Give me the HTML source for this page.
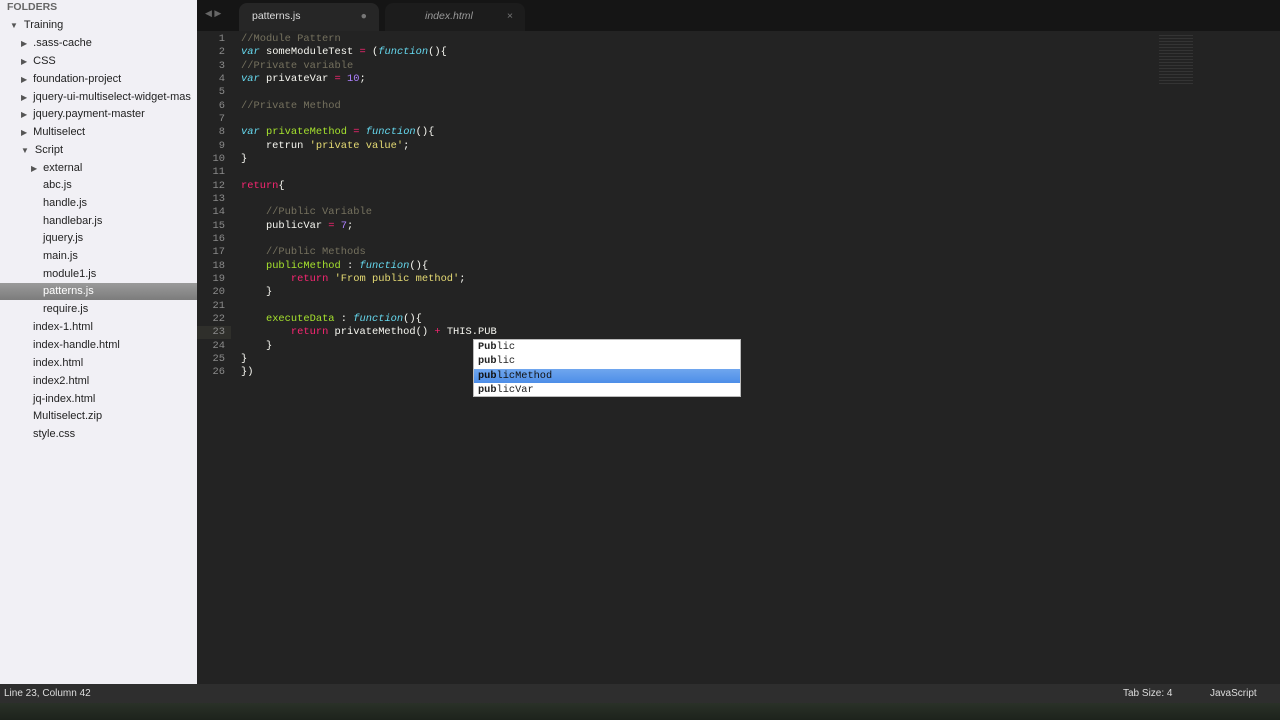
<!DOCTYPE html>
<html><head><meta charset="utf-8"><style>
*{margin:0;padding:0;box-sizing:border-box}
body{width:1280px;height:720px;overflow:hidden;background:#232323;position:relative;font-family:"Liberation Sans",sans-serif}
#side{position:absolute;left:0;top:0;width:197px;height:684px;background:#f1f0f5;font-size:11px;color:#222}
#side div{position:absolute;white-space:nowrap;height:18px;line-height:18px}
.tri{font-size:8px;color:#555;margin-right:6px}
#sel{left:0;width:197px;background:linear-gradient(#9a9a9a,#7c7c7c);color:#fff}
#tabs{position:absolute;left:197px;top:0;width:1083px;height:31px;background:#151515}
.tab{position:absolute;top:3px;height:28px;border-radius:8px 8px 0 0;font-size:10.5px;line-height:26px;color:#ddd}
#ed{position:absolute;left:197px;top:33px;width:1083px;height:651px;background:#232323;font-family:"Liberation Mono",monospace;font-size:10.4px}
.l{position:absolute;left:0;height:13px;line-height:13px;white-space:pre;color:#f8f8f2}
.n{position:absolute;width:28px;text-align:right;color:#8a8a8a}
.c{position:absolute;left:44px}
.cm{color:#75715e}.k{color:#66d9ef;font-style:italic}.r{color:#f92672}.g{color:#a6e22e}.s{color:#e6db74}.p{color:#ae81ff}
#ac{position:absolute;left:473px;top:339px;width:268px;height:58px;background:#fff;border:1px solid #bbb;font-family:"Liberation Mono",monospace;font-size:10.3px;color:#222}
#ac div{height:14.3px;line-height:14px;padding-left:4px}
#status{position:absolute;left:0;top:684px;width:1280px;height:19px;background:#2e2e2e;color:#ddd;font-size:10px;line-height:19px}
#dock{position:absolute;left:0;top:703px;width:1280px;height:17px;background:linear-gradient(#2a3128,#1d231c)}
</style></head><body>
<div id="side">
<div style="left:7px;top:-2px;color:#666;font-weight:bold;font-size:10.5px">FOLDERS</div>
<div style="left:10px;top:16px"><span class="tri">▼</span>Training</div>
<div style="left:21px;top:34px"><span class="tri">▶</span>.sass-cache</div>
<div style="left:21px;top:52px"><span class="tri">▶</span>CSS</div>
<div style="left:21px;top:70px"><span class="tri">▶</span>foundation-project</div>
<div style="left:21px;top:88px"><span class="tri">▶</span>jquery-ui-multiselect-widget-mas</div>
<div style="left:21px;top:105px"><span class="tri">▶</span>jquery.payment-master</div>
<div style="left:21px;top:123px"><span class="tri">▶</span>Multiselect</div>
<div style="left:21px;top:141px"><span class="tri">▼</span>Script</div>
<div style="left:31px;top:159px"><span class="tri">▶</span>external</div>
<div style="left:43px;top:176px">abc.js</div>
<div style="left:43px;top:194px">handle.js</div>
<div style="left:43px;top:212px">handlebar.js</div>
<div style="left:43px;top:229px">jquery.js</div>
<div style="left:43px;top:247px">main.js</div>
<div style="left:43px;top:265px">module1.js</div>
<div id="sel" style="top:283px;height:17px;line-height:17px"><span style="padding-left:43px">patterns.js</span></div>
<div style="left:43px;top:300px">require.js</div>
<div style="left:33px;top:318px">index-1.html</div>
<div style="left:33px;top:336px">index-handle.html</div>
<div style="left:33px;top:354px">index.html</div>
<div style="left:33px;top:372px">index2.html</div>
<div style="left:33px;top:390px">jq-index.html</div>
<div style="left:33px;top:407px">Multiselect.zip</div>
<div style="left:33px;top:425px">style.css</div>
</div>
<div id="tabs">
<div style="position:absolute;left:8px;top:8px;color:#666;font-size:9px">◀ ▶</div>
<div class="tab" style="left:42px;width:140px;background:#262626"><span style="padding-left:13px">patterns.js</span><span style="position:absolute;right:12px;color:#777">●</span></div>
<div class="tab" style="left:188px;width:140px;background:#1c1c1c;color:#999;font-style:italic"><span style="padding-left:40px">index.html</span><span style="position:absolute;right:12px;color:#777;font-style:normal">×</span></div>
</div>
<div id="ed">
<div style="position:absolute;left:0;top:293px;width:34px;height:13px;background:#2f2f2b"></div>
<div class="l" style="top:0"><span class="n">1</span><span class="c cm">//Module Pattern</span></div>
<div class="l" style="top:13.3px"><span class="n">2</span><span class="c"><span class="k">var</span> someModuleTest <span class="r">=</span> (<span class="k">function</span>(){</span></div>
<div class="l" style="top:26.6px"><span class="n">3</span><span class="c cm">//Private variable</span></div>
<div class="l" style="top:40px"><span class="n">4</span><span class="c"><span class="k">var</span> privateVar <span class="r">=</span> <span class="p">10</span>;</span></div>
<div class="l" style="top:53.3px"><span class="n">5</span></div>
<div class="l" style="top:66.6px"><span class="n">6</span><span class="c cm">//Private Method</span></div>
<div class="l" style="top:80px"><span class="n">7</span></div>
<div class="l" style="top:93.3px"><span class="n">8</span><span class="c"><span class="k">var</span> <span class="g">privateMethod</span> <span class="r">=</span> <span class="k">function</span>(){</span></div>
<div class="l" style="top:106.6px"><span class="n">9</span><span class="c">    retrun <span class="s">'private value'</span>;</span></div>
<div class="l" style="top:120px"><span class="n">10</span><span class="c">}</span></div>
<div class="l" style="top:133.3px"><span class="n">11</span></div>
<div class="l" style="top:146.6px"><span class="n">12</span><span class="c"><span class="r">return</span>{</span></div>
<div class="l" style="top:160px"><span class="n">13</span></div>
<div class="l" style="top:173.3px"><span class="n">14</span><span class="c cm">    //Public Variable</span></div>
<div class="l" style="top:186.6px"><span class="n">15</span><span class="c">    publicVar <span class="r">=</span> <span class="p">7</span>;</span></div>
<div class="l" style="top:200px"><span class="n">16</span></div>
<div class="l" style="top:213.3px"><span class="n">17</span><span class="c cm">    //Public Methods</span></div>
<div class="l" style="top:226.6px"><span class="n">18</span><span class="c">    <span class="g">publicMethod</span> : <span class="k">function</span>(){</span></div>
<div class="l" style="top:240px"><span class="n">19</span><span class="c">        <span class="r">return</span> <span class="s">'From public method'</span>;</span></div>
<div class="l" style="top:253.3px"><span class="n">20</span><span class="c">    }</span></div>
<div class="l" style="top:266.6px"><span class="n">21</span></div>
<div class="l" style="top:280px"><span class="n">22</span><span class="c">    <span class="g">executeData</span> : <span class="k">function</span>(){</span></div>
<div class="l" style="top:293.3px"><span class="n">23</span><span class="c">        <span class="r">return</span> privateMethod() <span class="r">+</span> THIS.PUB</span></div>
<div class="l" style="top:306.6px"><span class="n">24</span><span class="c">    }</span></div>
<div class="l" style="top:320px"><span class="n">25</span><span class="c">}</span></div>
<div class="l" style="top:333.3px"><span class="n">26</span><span class="c">})</span></div>
<div style="position:absolute;left:962px;top:2px;width:34px;height:50px;opacity:.5;background:repeating-linear-gradient(#444 0 1px,transparent 1px 3px)"></div>
</div>
<div id="ac">
<div><b>Pub</b>lic</div>
<div><b>pub</b>lic</div>
<div style="background:linear-gradient(#6fa6ee,#4d8ee8);color:#111"><b>pub</b>licMethod</div>
<div><b>pub</b>licVar</div>
</div>
<div id="status"><span style="position:absolute;left:4px">Line 23, Column 42</span><span style="position:absolute;left:1123px">Tab Size: 4</span><span style="position:absolute;left:1210px">JavaScript</span></div>
<div id="dock"></div>
</body></html>
